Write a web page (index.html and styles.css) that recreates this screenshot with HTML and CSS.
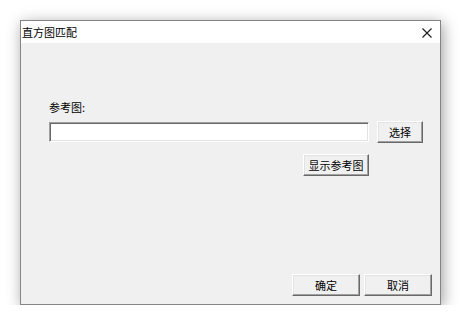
FILE: index.html
```html
<!DOCTYPE html>
<html lang="zh-CN">
<head>
<meta charset="utf-8">
<title>直方图匹配</title>
<link rel="stylesheet" href="styles.css">
</head>
<body>
  <div class="window">
    <div class="titlebar">
      <span class="title">直方图匹配</span>
      <span class="close">
        <svg width="10" height="10" viewBox="0 0 10 10"><path d="M0.5 0.5 L9.5 9.5 M9.5 0.5 L0.5 9.5" stroke="#1a1a1a" stroke-width="1.1" fill="none"/></svg>
      </span>
    </div>
    <div class="client">
      <div class="form">
        <div class="label">参考图:</div>
        <div class="row">
          <div class="input"></div>
          <div class="btn btn-pick">选择</div>
        </div>
        <div class="row2">
          <div class="btn btn-show">显示参考图</div>
        </div>
      </div>
      <div class="footer">
        <div class="btn btn-foot">确定</div>
        <div class="btn btn-foot">取消</div>
      </div>
    </div>
  </div>
</body>
</html>
```
FILE: styles.css
```css
* { box-sizing: border-box; }
html, body { margin: 0; background: #ffffff; }
body {
  padding: 20px 0 0 20px;
  font-family: "Noto Sans CJK SC", "Noto Sans", sans-serif;
  font-size: 11px;
  color: #000;
}
.window {
  width: 421px;
  height: 285px;
  border: 1px solid #858585;
  background: #f0f0f0;
  box-shadow: 2px 3px 14px rgba(0,0,0,0.38);
  display: flex;
  flex-direction: column;
}
.titlebar {
  height: 22px;
  background: #ffffff;
  display: flex;
  align-items: center;
  justify-content: space-between;
  padding: 0 8px 0 1px;
  flex: none;
}
.title { line-height: 13px; }
.close { display: flex; width: 10px; height: 10px; margin-top: 1px; }
.client {
  flex: 1;
  display: flex;
  flex-direction: column;
  background: #f0f0f0;
}
.form { padding: 58px 0 0 28px; }
.label { line-height: 13px; height: 13px; margin-bottom: 7px; }
.row { display: flex; align-items: center; gap: 8px; }
.input {
  width: 320px;
  height: 20px;
  background: #fff;
  border: 1px solid;
  border-color: #a0a0a0 #ffffff #ffffff #a0a0a0;
  box-shadow: inset 1px 1px #696969, inset -1px -1px #e3e3e3;
}
.btn {
  height: 22px;
  display: flex;
  align-items: center;
  justify-content: center;
  line-height: 13px;
  background: #f0f0f0;
  border: 1px solid;
  border-color: #ffffff #696969 #696969 #ffffff;
  box-shadow: inset -1px -1px #a0a0a0, inset 1px 1px #e3e3e3;
}
.btn-pick { width: 46px; }
.row2 { width: 320px; display: flex; justify-content: flex-end; margin-top: 11px; }
.btn-show { width: 66px; }
.footer {
  margin-top: auto;
  display: flex;
  justify-content: flex-end;
  gap: 4px;
  padding: 0 8px 8px 0;
}
.btn-foot { width: 68px; }
```
